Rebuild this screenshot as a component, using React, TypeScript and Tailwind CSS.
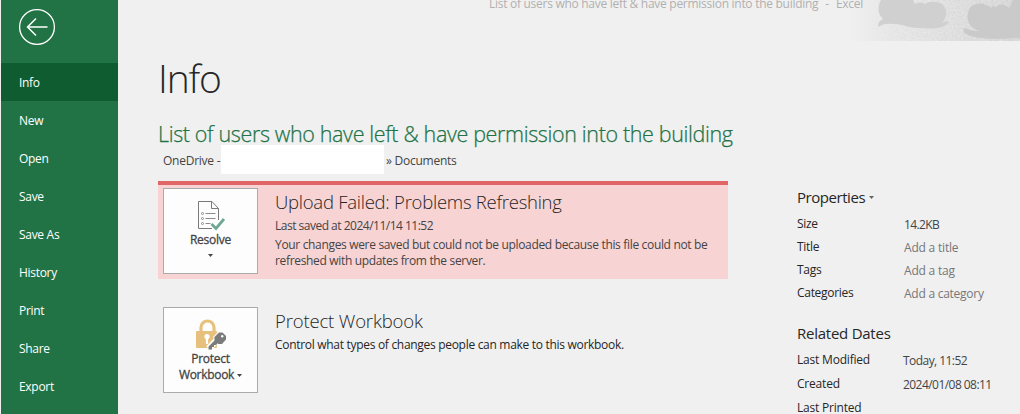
import React from 'react'

const menu = ['Info', 'New', 'Open', 'Save', 'Save As', 'History', 'Print', 'Share', 'Export']

const properties = [
  { label: 'Size', value: '14.2KB', style: 'text-[#444444] tracking-[-0.6px]' },
  { label: 'Title', value: 'Add a title', style: 'text-[#777777] tracking-[-0.2px]' },
  { label: 'Tags', value: 'Add a tag', style: 'text-[#777777] tracking-[-0.2px]' },
  { label: 'Categories', value: 'Add a category', style: 'text-[#777777] tracking-[-0.25px]' },
]

const dates = [
  { label: 'Last Modified', value: 'Today, 11:52' },
  { label: 'Created', value: '2024/01/08 08:11' },
  { label: 'Last Printed', value: '' },
]

function Caret({ className = '' }: { className?: string }) {
  return (
    <svg className={className} width="5" height="3" viewBox="0 0 5 3" fill="currentColor">
      <path d="M0 0h5L2.5 3z" />
    </svg>
  )
}

function BackIcon() {
  return (
    <svg width="38" height="38" viewBox="0 0 38 38" fill="none" stroke="white">
      <circle cx="19" cy="19" r="17.4" strokeWidth="1.3" />
      <path d="M29.5 19H10" stroke="#c8dcd0" strokeWidth="2" />
      <path d="M18 10.5L9.5 19l8.500 8.500" strokeWidth="1.5" />
    </svg>
  )
}

function ResolveIcon() {
  return (
    <svg width="28" height="30" viewBox="0 0 28 30" fill="none">
      <path d="M20.500 19V7.500L14 .5H.5v27H14" stroke="#7a7a7a" />
      <path d="M13.500.5v7h7" stroke="#7a7a7a" />
      <path d="M7.500 12.500h10M7.500 17.500h10M7.500 22.500h5" stroke="#8a8a8a" />
      <g stroke="#8a8a8a">
        <circle cx="4.500" cy="12.500" r="1" />
        <circle cx="4.500" cy="17.500" r="1" />
        <circle cx="4.500" cy="22.500" r="1" />
      </g>
      <path d="M13.500 23l4.500 4.500L26 18" stroke="#6fa892" strokeWidth="2.800" />
    </svg>
  )
}

function ProtectIcon() {
  return (
    <svg width="31" height="32" viewBox="0 0 31 32" fill="none">
      <path d="M5 13V8.500a6.500 6.500 0 0 1 13 0V13" stroke="#e8c07d" strokeWidth="3.200" />
      <rect y="12" width="21" height="17" rx="1" fill="#e8c07d" />
      <circle cx="11" cy="17.500" r="2.600" fill="white" />
      <path d="M11 18v7" stroke="white" strokeWidth="2.200" />
      <path d="M12.500 29.500L21 21" stroke="#fdfdfd" strokeWidth="6.500" />
      <path d="M17.500 17.500l5-5h4l4.500 4.500v4l-4.500 5h-4l-5-5z" fill="#fdfdfd" />
      <path d="M18.500 18l4.500-4.500h3.500L30 17v3.500L26 25h-3.500l-4-3.500z" fill="#7b7b7b" />
      <path d="M12.500 30.500v-3l7-7 3 3-2.500 2.500h-2v2h-2v2.500z" fill="#7b7b7b" />
      <circle cx="26.200" cy="17.300" r="1.200" fill="#fdfdfd" />
    </svg>
  )
}

export default function App() {
  return (
    <div className="relative flex h-[414px] w-[1020px] overflow-hidden bg-[#f0f0f0] pl-px font-['Open_Sans',sans-serif] text-[12px] text-[#262626]">
      <nav className="w-[117px] shrink-0 bg-[#217346] text-white">
        <div className="h-[63px] pl-[17px] pt-2">
          <BackIcon />
        </div>
        {menu.map((item) => (
          <div
            key={item}
            className={`h-[38px] pl-[18px] leading-[40px] tracking-[-0.3px] ${item === 'Info' ? 'bg-[#0e5c2f]' : ''}`}
          >
            {item}
          </div>
        ))}
      </nav>

      <main className="ml-10 w-[570px] shrink-0 whitespace-nowrap pt-[54px]">
        <h1 className="text-[39px] font-light leading-[48px] tracking-[-1.2px]">Info</h1>
        <h2 className="mt-[20px] h-[23px] text-[21.5px] font-light leading-6 tracking-[-0.36px] text-[#217346] [-webkit-text-stroke:0.25px_#217346]">
          List of users who have left &amp; have permission into the building
        </h2>
        <div className="flex h-[29px] pl-[5px] leading-[32px] tracking-[-0.25px] text-[#444444]">
          <span className="w-[58px]">OneDrive -</span>
          <span className="w-[163px] bg-white" />
          <span className="ml-[2px]">» Documents</span>
        </div>

        <section className="mt-[7px] flex h-[98px] border-t-4 border-[#e06666] bg-[#f8d3d3] pl-[5px] pt-[3px] text-[#444444]">
          <button className="flex h-[86px] w-[95px] flex-col items-center border border-[#ababab] bg-[#fdfdfd] pt-3">
            <span className="ml-[3px]">
              <ResolveIcon />
            </span>
            <span className="mt-px leading-4 tracking-[-0.25px] [-webkit-text-stroke:0.3px_#444444]">Resolve</span>
            <Caret className="mt-[6px]" />
          </button>
          <div className="ml-[17px] pt-[2px]">
            <h3 className="text-[18.5px] font-light leading-6 tracking-[-0.25px] text-[#262626]">Upload Failed: Problems Refreshing</h3>
            <p className="mt-1 leading-4 tracking-[-0.5px]">Last saved at 2024/11/14 11:52</p>
            <p className="mt-[3px] leading-4 tracking-[-0.33px]">
              Your changes were saved but could not be uploaded because this file could not be
              <br />
              refreshed with updates from the server.
            </p>
          </div>
        </section>

        <section className="mt-7 flex pl-[5px]">
          <button className="flex h-[86px] w-[95px] flex-col items-center border border-[#ababab] bg-[#fdfdfd] pt-[11px] text-[#444444]">
            <span className="ml-[2px]">
              <ProtectIcon />
            </span>
            <span className="leading-4 tracking-[-0.25px] [-webkit-text-stroke:0.3px_#444444]">Protect</span>
            <span className="flex items-center leading-4 tracking-[-0.3px] [-webkit-text-stroke:0.3px_#444444]">
              Workbook
              <Caret className="ml-[3px]" />
            </span>
          </button>
          <div className="ml-[17px] pt-[2px]">
            <h3 className="text-[18.5px] font-light leading-6 tracking-[-0.15px]">Protect Workbook</h3>
            <p className="mt-1 leading-4 tracking-[-0.3px]">Control what types of changes people can make to this workbook.</p>
          </div>
        </section>
      </main>

      <aside className="ml-[69px] w-[223px] shrink-0 whitespace-nowrap pt-[187px]">
        <h3 className="flex items-center text-[15px] leading-5 tracking-[-0.45px]">
          Properties
          <Caret className="ml-1 text-[#666666]" />
        </h3>
        <div className="mt-[5px]">
          {properties.map((row) => (
            <div key={row.label} className="flex h-[23px] leading-[23px]">
              <span className="w-[107px] tracking-[-0.3px]">{row.label}</span>
              <span className={`pt-px ${row.style}`}>{row.value}</span>
            </div>
          ))}
        </div>
        <h3 className="mt-[19px] text-[15px] leading-5 tracking-[-0.25px]">Related Dates</h3>
        <div className="mt-[5px]">
          {dates.map((row) => (
            <div key={row.label} className="flex h-6 leading-6">
              <span className="w-[106px] tracking-[-0.2px]">{row.label}</span>
              <span className="pt-px tracking-[-0.55px] text-[#444444]">{row.value}</span>
            </div>
          ))}
        </div>
      </aside>

      <svg className="absolute right-0 top-0" width="170" height="41" viewBox="-10 0 170 41">
        <defs>
          <linearGradient id="fade" x1="0" x2="1">
            <stop offset="0" stopColor="#f0f0f0" />
            <stop offset=".25" stopColor="#e4e4e4" />
            <stop offset=".65" stopColor="#dadada" />
            <stop offset="1" stopColor="#d2d2d2" />
          </linearGradient>
          <linearGradient id="grainFade" x1="0" x2="1">
            <stop offset="0" stopColor="black" />
            <stop offset=".3" stopColor="#999999" />
          </linearGradient>
          <mask id="grainMask">
            <rect x="-10" width="170" height="41" fill="url(#grainFade)" />
          </mask>
          <filter id="grain" x="0" y="0" width="100%" height="100%">
            <feTurbulence type="fractalNoise" baseFrequency=".5" numOctaves="2" />
            <feColorMatrix values="0 0 0 0 1  0 0 0 0 1  0 0 0 0 1  1 0 0 0 -.3" />
          </filter>
        </defs>
        <rect x="-10" width="170" height="41" fill="url(#fade)" />
        <g mask="url(#grainMask)">
          <rect x="-10" width="170" height="41" filter="url(#grain)" />
        </g>
        <path
          d="M21 0c-4 7-3 14 2 19-4 2-5 5-5 8 4-3 9-4 16-3 10 0 14 4 25 4 14 1 25 1 30-6-3-1-5 0-7 1 5-6 6-14 0-19-5-3-12-3-17 0-3-2-7-2-10 0l-2-4z"
          fill="#d0d0d0"
        />
        <path
          d="M160 0h-7c-2 3-2 6-4 8-4-4-9-5-13-1-3-1-4-1-5 1-6-6-17-6-21 0-4 6-3 14 1 18 2 2 5 4 8 5-7 0-11-2-15-3-2 4 2 7 7 8 14 4 33 3 49 2z"
          fill="#cacaca"
        />
      </svg>

      <div className="absolute left-[489px] top-[-5px] flex gap-[7px] whitespace-nowrap leading-[18px] tracking-[-0.28px] text-[#b0b0b0]">
        <span>List of users who have left &amp; have permission into the building</span>
        <span>-</span>
        <span>Excel</span>
      </div>
    </div>
  )
}
